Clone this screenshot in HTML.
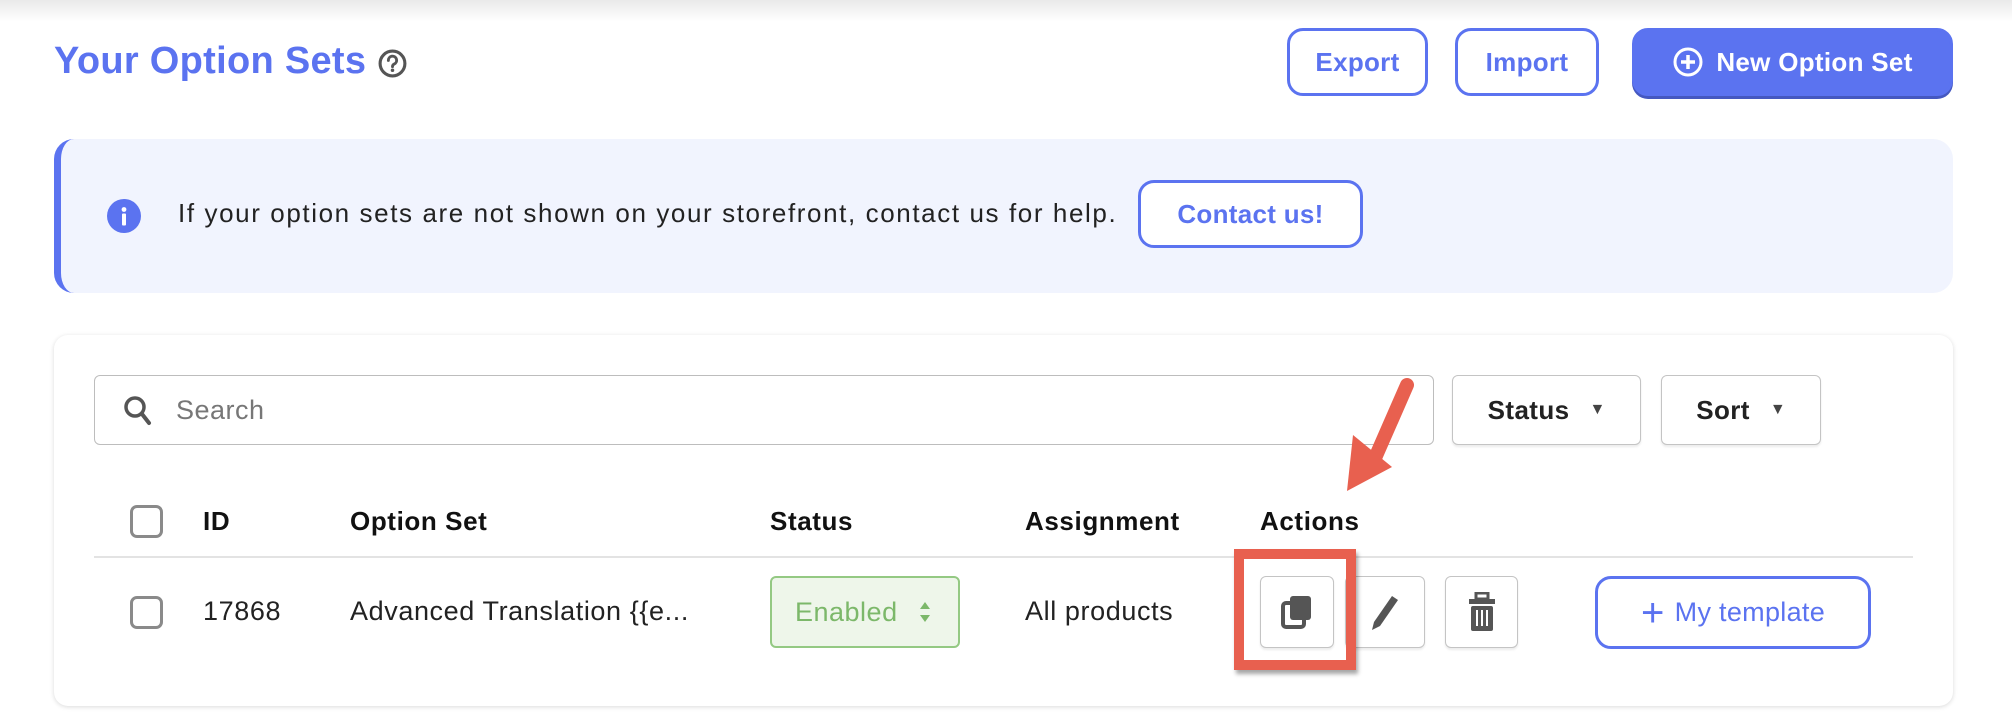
<!DOCTYPE html>
<html><head><meta charset="utf-8"><style>
*{box-sizing:border-box;margin:0;padding:0}
body{width:2012px;height:726px;background:#fff;position:relative;overflow:hidden;font-family:"Liberation Sans",sans-serif;color:#1f1f1f}
.a{position:absolute}
.topsh{left:0;top:0;width:2012px;height:22px;background:linear-gradient(#e9e9e9,#fff)}
.btn{position:absolute;border:3px solid #5b73f0;border-radius:16px;color:#5b73f0;font-weight:bold;font-size:26px;display:flex;align-items:center;justify-content:center;background:#fff;letter-spacing:.3px}
.gb{position:absolute;border:1.5px solid #c4c4c4;border-radius:6px;background:#fff;display:flex;align-items:center;justify-content:center;box-shadow:0 2px 2px rgba(0,0,0,.08)}
.th{position:absolute;top:506px;font-weight:bold;font-size:26px;color:#111;letter-spacing:.6px}
.td{position:absolute;top:596px;font-size:27px;color:#222;letter-spacing:.6px}
.cb{position:absolute;left:130px;width:33px;height:33px;border:3px solid #8a8a8a;border-radius:7px}
.dd{font-size:26px;font-weight:bold;color:#222;letter-spacing:.4px}
</style></head><body>
<div class="a topsh"></div>
<div class="a" style="left:54px;top:40px;font-size:38px;font-weight:bold;color:#5b73f0;letter-spacing:.3px">Your Option Sets</div>
<svg class="a" style="left:377px;top:48px" width="31" height="31" viewBox="0 0 30 30"><circle cx="15" cy="15" r="12" fill="none" stroke="#555" stroke-width="3"/><path d="M11 12a4 4 0 1 1 5.5 3.6c-1 .5-1.5 1.2-1.5 2.4" fill="none" stroke="#555" stroke-width="2.8" stroke-linecap="round"/><circle cx="15" cy="21.5" r="1.7" fill="#555"/></svg>
<div class="btn" style="left:1287px;top:28px;width:141px;height:68px">Export</div>
<div class="btn" style="left:1455px;top:28px;width:144px;height:68px">Import</div>
<div class="btn" style="left:1632px;top:28px;width:321px;height:68px;background:#5b73f0;color:#fff;box-shadow:0 3px 0 #4558c0"><svg width="32" height="32" viewBox="0 0 32 32" style="margin-right:12px"><circle cx="16" cy="16" r="13" fill="none" stroke="#fff" stroke-width="3"/><path d="M16 9v14M9 16h14" stroke="#fff" stroke-width="3.5"/></svg>New Option Set</div>
<div class="a" style="left:54px;top:139px;width:1899px;height:154px;background:#f1f4fe;border-radius:20px;border-left:7px solid #5b73f0"></div>
<svg class="a" style="left:107px;top:199px" width="34" height="34" viewBox="0 0 34 34"><circle cx="17" cy="17" r="17" fill="#5b73f0"/><circle cx="17" cy="10.5" r="2.4" fill="#fff"/><rect x="15" y="14.5" width="4" height="12" rx="1" fill="#fff"/></svg>
<div class="a" style="left:178px;top:198px;font-size:26px;color:#222;letter-spacing:1.6px">If your option sets are not shown on your storefront, contact us for help.</div>
<div class="btn" style="left:1138px;top:180px;width:225px;height:68px">Contact us!</div>
<div class="a" style="left:54px;top:335px;width:1899px;height:371px;background:#fff;border-radius:14px;box-shadow:0 1px 5px rgba(0,0,0,.15)"></div>
<div class="a" style="left:94px;top:375px;width:1340px;height:70px;border:1.5px solid #bdbdbd;border-radius:6px"></div>
<svg class="a" style="left:121px;top:393px" width="36" height="36" viewBox="0 0 36 36"><circle cx="14" cy="14" r="9" fill="none" stroke="#555" stroke-width="3.5"/><path d="M21 21l7 9" stroke="#555" stroke-width="4" stroke-linecap="round"/></svg>
<div class="a" style="left:176px;top:395px;font-size:27px;color:#777;letter-spacing:.5px">Search</div>
<div class="gb" style="left:1452px;top:375px;width:189px;height:70px"><span class="dd">Status</span><span style="margin-left:20px;font-size:16px;color:#444">▼</span></div>
<div class="gb" style="left:1661px;top:375px;width:160px;height:70px"><span class="dd">Sort</span><span style="margin-left:20px;font-size:16px;color:#444">▼</span></div>
<div class="cb" style="top:505px"></div>
<div class="th" style="left:203px">ID</div>
<div class="th" style="left:350px">Option Set</div>
<div class="th" style="left:770px">Status</div>
<div class="th" style="left:1025px">Assignment</div>
<div class="th" style="left:1260px">Actions</div>
<div class="a" style="left:94px;top:556px;width:1819px;height:2px;background:#e3e3e3"></div>
<div class="cb" style="top:596px"></div>
<div class="td" style="left:203px">17868</div>
<div class="td" style="left:350px">Advanced Translation {{e...</div>
<div class="a" style="left:770px;top:576px;width:190px;height:72px;background:#eef6ea;border:2px solid #94c983;border-radius:6px;display:flex;align-items:center;padding-left:23px;font-size:27px;color:#7cb86a;letter-spacing:.5px">Enabled<svg width="14" height="24" viewBox="0 0 14 24" style="margin-left:20px"><path d="M7 2l5 7H2zM7 22l5-7H2z" fill="#7cb86a"/></svg></div>
<div class="td" style="left:1025px">All products</div>
<div class="gb" style="left:1260px;top:576px;width:74px;height:72px"><svg width="34" height="36" viewBox="0 0 34 36"><rect x="3" y="9" width="21" height="24" rx="3" fill="none" stroke="#555" stroke-width="4"/><rect x="10" y="2" width="21" height="24" rx="3" fill="#555"/></svg></div>
<div class="gb" style="left:1345px;top:576px;width:80px;height:72px"><svg width="34" height="40" viewBox="0 0 34 40"><path d="M6 30L24 4l6 4L12 34 4 38z" fill="#555"/></svg></div>
<div class="gb" style="left:1445px;top:576px;width:73px;height:72px"><svg width="30" height="40" viewBox="0 0 30 40"><rect x="9" y="1" width="12" height="6" fill="none" stroke="#555" stroke-width="3"/><rect x="2" y="7" width="26" height="5" fill="#555"/><rect x="4" y="14" width="22" height="25" rx="2" fill="#555"/><path d="M10 18v16M15 18v16M20 18v16" stroke="#fff" stroke-width="2"/></svg></div>
<div class="btn" style="left:1595px;top:576px;width:276px;height:73px;font-weight:normal;font-size:27px"><span style="font-size:40px;margin-right:10px;line-height:1">+</span>My template</div>
<div class="a" style="left:1234px;top:549px;width:122px;height:121px;border:10px solid #e8604f;box-shadow:2px 4px 4px rgba(0,0,0,.35)"></div>
<svg class="a" style="left:1330px;top:375px" width="100" height="130" viewBox="0 0 100 130"><path d="M77 10L42 90" stroke="#e8604f" stroke-width="14" stroke-linecap="round"/><path d="M17 116L23 60 62 92z" fill="#e8604f"/></svg>
</body></html>
